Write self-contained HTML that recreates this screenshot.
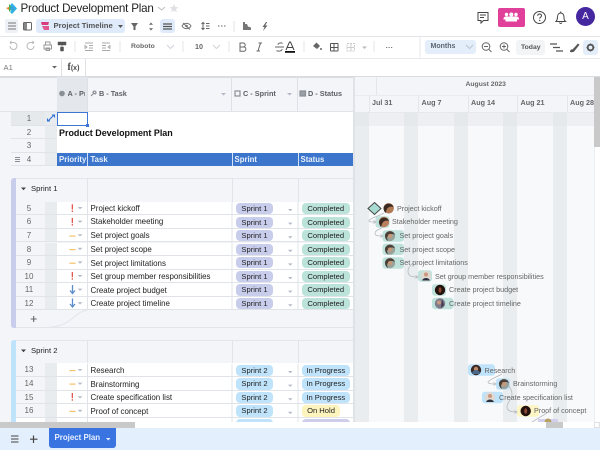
<!DOCTYPE html>
<html><head><meta charset="utf-8"><style>
html,body{margin:0;padding:0;width:600px;height:450px;overflow:hidden;background:#fff}
*{box-sizing:border-box}
body{font-family:"Liberation Sans",sans-serif;position:relative;color:#222}
.a,.t,.r,.n,.g,.c,.tx,.sp,.st,.l{position:absolute}
.t{white-space:nowrap;line-height:12px}
.r{left:11px;width:342px;height:13.6px;background:#fff;border-bottom:1px solid #e0e3e7}
.n{left:16px;width:29px;height:13.6px;background:#f3f5f8;border-bottom:1px solid #e0e3e7;font-size:8px;line-height:13px;text-align:center;color:#666;text-indent:-3px}
.top{left:11px;width:34px;text-indent:2px}
.g{left:45px;width:12px;height:13.6px;background:#e9ecef;border-bottom:1px solid #e0e3e7}
.tx{left:90.5px;font-size:7.95px;line-height:13.6px;color:#222;white-space:nowrap}
.sp{left:236px;width:37px;height:11.4px;border-radius:4px;font-size:7.6px;line-height:11.4px;text-align:center;color:#222}
.st{left:302px;width:47.5px;height:11.4px;border-radius:4px;font-size:7.6px;line-height:11.4px;text-align:center;color:#222}
.s1{background:#c9cdec}.s2{background:#bfe3fb}
.cp{background:#bce3da}.ip{background:#bfe3fb}.oh{background:#fdf3bd;width:38px}.ns{background:#cfcdec}
.l{font-size:7.2px;line-height:12px;color:#666;white-space:nowrap}
.h{font-size:7.3px;font-weight:bold;color:#5c5f64;line-height:12px}
.w{font-size:7.2px;font-weight:bold;color:#666}
.b4{top:154px;font-size:7.8px;font-weight:bold;color:#eaf1fb}
</style></head><body>

<!-- base -->
<div class="a" style="left:0;top:77px;width:600px;height:351px;background:#f3f5f9"></div>
<div class="a" style="left:0;top:36px;width:600px;height:1px;background:#e3e5e8"></div>
<div class="a" style="left:0;top:58px;width:600px;height:1px;background:#e8eaed"></div>
<div class="a" style="left:0;top:76px;width:600px;height:1.5px;background:#d9dce0"></div>

<!-- title -->
<div class="t" style="left:20.5px;top:3px;font-size:11.6px;letter-spacing:-.2px;color:#1f1f1f">Product Development Plan</div>

<!-- toolbar backgrounds -->
<div class="a" style="left:5px;top:19px;width:13px;height:14px;background:#eef1f6;border-radius:2px"></div>
<div class="a" style="left:36px;top:19px;width:89px;height:14px;background:#dfeafb;border-radius:3px"></div>
<div class="a" style="left:160px;top:19px;width:15px;height:14px;background:#dfeafb;border-radius:3px"></div>
<div class="t" style="left:53.5px;top:20px;font-size:7.7px;font-weight:bold;color:#555">Project Timeline</div>
<div class="t" style="left:131px;top:41px;font-size:6.8px;font-weight:bold;color:#666">Roboto</div>
<div class="t" style="left:195px;top:41px;font-size:7.2px;font-weight:bold;color:#666">10</div>
<div class="a" style="left:425px;top:40px;width:51px;height:14px;background:#e4eefb;border-radius:3px"></div>
<div class="t" style="left:430.5px;top:41px;font-size:7px;font-weight:bold;color:#5b6470">Months</div>
<div class="a" style="left:516px;top:40px;width:29px;height:15px;background:#f3f4f6;border-radius:3px"></div>
<div class="t" style="left:521px;top:42px;font-size:6.8px;font-weight:bold;color:#555">Today</div>
<div class="a" style="left:583px;top:40px;width:15px;height:15px;background:#e4eefb;border-radius:3px"></div>
<div class="t" style="left:3.5px;top:62px;font-size:7.6px;color:#777">A1</div>
<div class="a" style="left:61px;top:59px;width:1px;height:17px;background:#dfe1e5"></div>
<div class="a" style="left:85px;top:59px;width:1px;height:17px;background:#dfe1e5"></div>
<div class="t" style="left:67.5px;top:62px;font-family:'Liberation Serif',serif;font-size:10px;font-weight:bold;color:#444">f<span style="font-family:'Liberation Sans';font-size:7px">(x)</span></div>

<!-- top right -->
<div class="a" style="left:498px;top:8px;width:26.5px;height:19px;background:#e0409a;border-radius:2px"></div>
<div class="a" style="left:576px;top:7px;width:19px;height:19px;background:#4527a0;border-radius:50%;color:#fff;font-size:10px;line-height:19px;text-align:center">A</div>

<!-- toolbar icons -->
<svg class="a" style="left:0;top:0" width="600" height="77" viewBox="0 0 600 77" fill="none">
<!-- logo -->
<path d="M6 8l3-1v3z" fill="#f0821e"/><path d="M9 4l4 4-4 4z" fill="#4caf50"/><path d="M12 3l5 5.500-5 5.500-2-2 3-3.500-3-3z" fill="#2fb4e6"/><path d="M9.500 8.500l3-3 3 3-3 3z" fill="#35a7dc"/>
<!-- chevron, star -->
<path d="M158 7l3.500 3 3.500-3" stroke="#b9bdc3"/>
<path d="M174 4l1.300 3 3.200.2-2.500 2 .9 3.200-2.900-1.800-2.900 1.800.9-3.200-2.500-2 3.200-.2z" fill="#dfe1e4"/>
<!-- view row -->
<path d="M8 23h8M8 26h8M8 29h8" stroke="#777" stroke-width="1"/>
<rect x="23.500" y="22.500" width="8" height="7.500" stroke="#666" rx="1"/><rect x="24" y="23" width="3" height="6.500" fill="#888"/>
<path d="M41 22h8l-.8 3h-6.400z" fill="#d93a7c"/><path d="M42 26h7v4h-5z" fill="#e0568f"/>
<path d="M118 25h5l-2.500 3z" fill="#555"/>
<path d="M131 23h7l-2.500 3.500v3.500h-2v-3.500z" fill="#666"/>
<path d="M151 22.500l2 2.200h-4zM151 30.500l2-2.200h-4z" fill="#666"/>
<path d="M163 24h9M163 26.500h9M163 29h9" stroke="#555" stroke-width="1.300"/>
<path d="M182 26c2-3.500 7-3.500 9 0-2 3.500-7 3.500-9 0z" stroke="#777"/><circle cx="186.500" cy="26" r="1.300" fill="#777"/><path d="M183 23l7 6.500" stroke="#777"/>
<path d="M203 23v6M201.500 24l1.500-1.500 1.500 1.500M201.500 28l1.500 1.500 1.500-1.500M206 23.500h3.500M206 26h3.500M206 28.500h3.500" stroke="#666"/>
<path d="M218 26h1.500M221 26h1.500M224 26h1.500" stroke="#666"/>
<path d="M234 21v11" stroke="#e1e3e6"/>
<path d="M243 22v8h8v-2.500l-3-1-1-2.500h-2v-2z" fill="#777"/><path d="M266 22l-3.500 5h2l-1.500 4 4.500-5.500h-2.300l2-3.500z" fill="#666"/>
<!-- format row -->
<path d="M10 46a3.500 3.500 0 1 0 3.500-3.500H10m0 0l1.500-1.500M10 42.500l1.500 1.500" stroke="#bbb"/>
<path d="M34 46a3.500 3.500 0 1 1-3.500-3.500H34m0 0l-1.500-1.500M34 42.500l-1.500 1.500" stroke="#bbb"/>
<path d="M44 45h7.500v4h-7.500zM45.500 45v-3h4.500v3M46 48h3.500v2.500H46z" stroke="#999"/>
<path d="M58 42h8v3h-8zM62 45v1.500M60.500 47h3v4h-3z" fill="#555" stroke="#555" stroke-width=".5"/>
<path d="M75 41v11" stroke="#e4e6e8"/>
<path d="M85 43h8M89 45.500h4M89 48h4M85 50.500h8M85 45.500l2 1.500-2 1.500z" stroke="#aaa" stroke-width=".9"/>
<path d="M102 43h8M102 45.500h4M102 48h4M102 50.500h8M110 45.500l-2 1.500 2 1.500z" stroke="#aaa" stroke-width=".9"/>
<path d="M120 41v11" stroke="#e4e6e8"/>
<path d="M167 45l3.500 3.500L174 45" stroke="#d0d3d7"/>
<path d="M183 41v11" stroke="#e4e6e8"/>
<path d="M213 45l3.500 3.500L220 45" stroke="#d0d3d7"/>
<path d="M229 41v11" stroke="#e4e6e8"/>
<path d="M240 43h3.200a2 2 0 0 1 0 4H240zM240 47h3.800a2.100 2.100 0 0 1 0 4.200H240z" stroke="#666" stroke-width="1"/>
<path d="M258.500 43h3.500M256.500 51H260M260.500 43l-2.500 8" stroke="#666" stroke-width="1"/>
<path d="M275 47h9M282.500 43.500c-.8-.8-4.500-1-4.500 1.300M276.500 50.500c1 1 5.500 1 5.500-1.500" stroke="#666"/>
<path d="M286 50l3.500-8h1l3.500 8M287.500 47.500h5" stroke="#444" stroke-width="1"/><rect x="285" y="51" width="10" height="1.800" fill="#111"/>
<path d="M304 41v11" stroke="#e4e6e8"/>
<path d="M313 46l3.500-3.500 3.500 3.500-3 3z" fill="#666"/><circle cx="321" cy="49" r="1" fill="#666"/>
<rect x="330.500" y="43.500" width="7.500" height="7.500" stroke="#555" rx=".5" stroke-width="1"/><path d="M334 43.500v7.500M330.500 47.500h7.500" stroke="#555"/>
<rect x="347" y="43.500" width="7.500" height="7.500" stroke="#ccc" stroke-dasharray="2 1"/><path d="M351 43.500v7.500M347 47.500h7.500" stroke="#ccc"/>
<path d="M362 46.500h5l-2.500 2.500z" fill="#bbb"/>
<path d="M374 41v11" stroke="#e4e6e8"/>
<path d="M386 47.500h1.200M388.500 47.500h1.200M391 47.500h1.200" stroke="#777"/>
<path d="M420 37v21" stroke="#e8eaed"/>
<path d="M466 45l3.500 3.500L473 45" stroke="#b9c4d2"/>
<circle cx="486" cy="46.500" r="3.800" stroke="#666"/><path d="M484 46.500h4M489 49.500l2.500 2.500" stroke="#666"/>
<circle cx="504" cy="46.500" r="3.800" stroke="#666"/><path d="M502 46.500h4M504 44.500v4M507 49.500l2.500 2.500" stroke="#666"/>
<path d="M550 44h7M553 47.500h7M556 51h7" stroke="#555" stroke-width="1.200"/>
<path d="M570 52c0-2 1-3 2.500-2.500l5.500-6 1.500 1.200-5 6.300c-.8 1.300-3 1.500-4.500 1z" fill="#555"/>
<circle cx="590.500" cy="47.500" r="2.800" stroke="#555" stroke-width="1.800"/><path d="M590.500 43.500v1.500M590.500 50v1.500M586.500 47.500H588M593 47.500h1.500M587.800 44.800l1 1M592.200 49.200l1 1M593.200 44.800l-1 1M588.800 49.200l-1 1" stroke="#555" stroke-width="1.200"/>
<!-- formula -->
<path d="M52 66h5l-2.500 2.500z" fill="#666"/>
<!-- right top icons -->
<path d="M478 12.500h10v8h-4.500l-2.500 2.500v-2.500h-3z" stroke="#444" stroke-width="1"/><path d="M480 15h6M480 17.500h4" stroke="#444"/>
<circle cx="506.500" cy="14.500" r="1.700" fill="#fff"/><circle cx="511.300" cy="14.500" r="2" fill="#fff"/><circle cx="516" cy="14.500" r="1.700" fill="#fff"/><path d="M503.500 19c0-1.500 1-2.500 3-2.500h9.500c2 0 3 1 3 2.500v.5h-2v2h-11.500v-2h-2z" fill="#fff"/>
<circle cx="539.500" cy="17.500" r="6" stroke="#444" stroke-width="1"/><path d="M537.700 15.800c0-2.400 3.800-2.400 3.800 0 0 1.300-1.800 1.300-1.800 2.800" stroke="#444"/><circle cx="539.700" cy="20.500" r=".7" fill="#444"/>
<path d="M556 21.500h9.500c-1.500-1.300-1.500-2.500-1.500-4.500 0-2.500-1.500-4-3.300-4s-3.200 1.500-3.200 4c0 2-.4 3.200-1.500 4.500zM559.500 22.500c.4 1.300 2 1.300 2.500 0M560.700 13v-1.500" stroke="#444"/>
</svg>

<!-- column headers -->
<div class="a" style="left:57px;top:77px;width:30px;height:35px;background:#e4e8ec"></div>
<div class="a" style="left:87px;top:77px;width:1px;height:35px;background:#dde0e5"></div>
<div class="a" style="left:231px;top:77px;width:1px;height:35px;background:#dde0e5"></div>
<div class="a" style="left:297px;top:77px;width:1px;height:35px;background:#dde0e5"></div>
<div class="a" style="left:353px;top:77px;width:2px;height:351px;background:#dfe2e6"></div>
<div class="a" style="left:0;top:111px;width:354px;height:1px;background:#e0e3e7"></div>
<div class="t h" style="left:67.500px;top:88px;width:17px;overflow:hidden">A - Priority</div>
<div class="t h" style="left:99px;top:88px">B - Task</div>
<div class="t h" style="left:243px;top:88px">C - Sprint</div>
<div class="t h" style="left:308px;top:88px">D - Status</div>
<svg class="a" style="left:0;top:77px" width="354" height="35" fill="none">
<circle cx="62" cy="16.500" r="2.800" fill="#8a8f96"/>
<path d="M91 19l3-3M93 15.500a1.500 1.500 0 1 1 2 1.500z" stroke="#8a8f96" stroke-width="1.200"/>
<rect x="235" y="14" width="5" height="5" stroke="#8a8f96" stroke-width="1.200"/>
<rect x="300" y="14" width="5.500" height="5" stroke="#8a8f96" stroke-width="1.200" fill="#9aa0a6"/>
<path d="M221 16h5l-2.500 2.500zM287 16h5l-2.500 2.500z" fill="#b3bac6"/>
</svg>

<!-- sheet top rows -->
<div class="n top" style="top:112px;background:#e6e9ec">1</div><div class="g" style="top:112px"></div>
<div class="n top" style="top:125.700px">2</div><div class="g" style="top:125.700px"></div>
<div class="n top" style="top:139.300px">3</div><div class="g" style="top:139.300px"></div>
<div class="n top" style="top:152.900px">4</div><div class="g" style="top:152.900px"></div>
<div class="a" style="left:57px;top:112px;width:296px;height:41px;background:#fff"></div>
<div class="a" style="left:57px;top:112px;width:30.500px;height:14px;border:1.200px solid #3d77d6;background:#fff"></div>
<div class="a" style="left:85.500px;top:123.500px;width:3.500px;height:3.500px;background:#3d77d6"></div>
<div class="t" style="left:59px;top:127px;font-size:8.950px;font-weight:bold;color:#111">Product Development Plan</div>
<div class="a" style="left:57px;top:153px;width:296px;height:13.300px;background:#3b75cc"></div>
<div class="a" style="left:87px;top:153px;width:1px;height:13.300px;background:#d6e2f5"></div>
<div class="a" style="left:231.500px;top:153px;width:1px;height:13.300px;background:#d6e2f5"></div>
<div class="a" style="left:297.500px;top:153px;width:1px;height:13.300px;background:#d6e2f5"></div>
<div class="t b4" style="left:59px">Priority</div>
<div class="t b4" style="left:90.500px">Task</div>
<div class="t b4" style="left:234.500px">Sprint</div>
<div class="t b4" style="left:300.500px">Status</div>
<svg class="a" style="left:0;top:112px" width="60" height="56" fill="none">
<path d="M48 9l6-6M52 3h2.500v2.500M50 9h-2.500V6.500" stroke="#2f6fd6" stroke-width="1.100"/>
<path d="M15 45.500h5M15 47.500h5M15 49.500h5" stroke="#8b8f95" stroke-width="1.100"/>
</svg>

<!-- group 1 -->
<div class="a" style="left:11px;top:178px;width:342px;height:150px;background:#f3f5f9;border-bottom:1px solid #e2e5e9;border-radius:0 0 0 3px"></div>
<div class="a" style="left:11px;top:178px;width:5px;height:150px;background:#c9cdec;border-radius:3px 0 0 3px"></div>
<div class="a" style="left:16px;top:178px;width:337px;height:1px;background:#e2e5e9"></div>
<div class="a" style="left:87px;top:178px;width:1px;height:24px;background:#e0e3e7"></div>
<div class="a" style="left:231.500px;top:178px;width:1px;height:24px;background:#e0e3e7"></div>
<div class="a" style="left:297.500px;top:178px;width:1px;height:24px;background:#e0e3e7"></div>
<div class="t" style="left:31px;top:183px;font-size:7.700px;color:#222">Sprint 1</div>

<!-- group 2 -->
<div class="a" style="left:11px;top:340px;width:342px;height:82px;background:#f3f5f9"></div>
<div class="a" style="left:11px;top:340px;width:5px;height:82px;background:#bfe3fb;border-radius:3px 0 0 0"></div>
<div class="a" style="left:16px;top:340px;width:337px;height:1px;background:#e2e5e9"></div>
<div class="a" style="left:87px;top:340px;width:1px;height:24px;background:#e0e3e7"></div>
<div class="a" style="left:231.500px;top:340px;width:1px;height:24px;background:#e0e3e7"></div>
<div class="a" style="left:297.500px;top:340px;width:1px;height:24px;background:#e0e3e7"></div>
<div class="t" style="left:31px;top:345px;font-size:7.700px;color:#222">Sprint 2</div>

<!-- rows group1 -->
<div class="r" style="top:201.700px;left:16px;width:337px"></div><div class="n" style="top:201.700px">5</div><div class="g" style="top:201.700px"></div><div class="tx" style="top:201.700px">Project kickoff</div><div class="sp s1" style="top:203px">Sprint 1</div><div class="st cp" style="top:203px">Completed</div>
<div class="r" style="top:215.300px;left:16px;width:337px"></div><div class="n" style="top:215.300px">6</div><div class="g" style="top:215.300px"></div><div class="tx" style="top:215.300px">Stakeholder meeting</div><div class="sp s1" style="top:216.500px">Sprint 1</div><div class="st cp" style="top:216.500px">Completed</div>
<div class="r" style="top:228.900px;left:16px;width:337px"></div><div class="n" style="top:228.900px">7</div><div class="g" style="top:228.900px"></div><div class="tx" style="top:229.300px">Set project goals</div><div class="sp s1" style="top:230px">Sprint 1</div><div class="st cp" style="top:230px">Completed</div>
<div class="r" style="top:242.500px;left:16px;width:337px"></div><div class="n" style="top:242.500px">8</div><div class="g" style="top:242.500px"></div><div class="tx" style="top:243px">Set project scope</div><div class="sp s1" style="top:243.500px">Sprint 1</div><div class="st cp" style="top:243.500px">Completed</div>
<div class="r" style="top:256.100px;left:16px;width:337px"></div><div class="n" style="top:256.100px">9</div><div class="g" style="top:256.100px"></div><div class="tx" style="top:256.600px">Set project limitations</div><div class="sp s1" style="top:257px">Sprint 1</div><div class="st cp" style="top:257px">Completed</div>
<div class="r" style="top:269.700px;left:16px;width:337px"></div><div class="n" style="top:269.700px">10</div><div class="g" style="top:269.700px"></div><div class="tx" style="top:270.200px">Set group member responsibilities</div><div class="sp s1" style="top:270.700px">Sprint 1</div><div class="st cp" style="top:270.700px">Completed</div>
<div class="r" style="top:283.300px;left:16px;width:337px"></div><div class="n" style="top:283.300px">11</div><div class="g" style="top:283.300px"></div><div class="tx" style="top:283.800px">Create project budget</div><div class="sp s1" style="top:284.300px">Sprint 1</div><div class="st cp" style="top:284.300px">Completed</div>
<div class="r" style="top:296.900px;left:16px;width:337px"></div><div class="n" style="top:296.900px">12</div><div class="g" style="top:296.900px"></div><div class="tx" style="top:297.400px">Create project timeline</div><div class="sp s1" style="top:297.800px">Sprint 1</div><div class="st cp" style="top:297.800px">Completed</div>

<!-- rows group2 -->
<div class="r" style="top:363.400px;left:16px;width:337px"></div><div class="n" style="top:363.400px">13</div><div class="g" style="top:363.400px"></div><div class="tx" style="top:364px">Research</div><div class="sp s2" style="top:364.800px">Sprint 2</div><div class="st ip" style="top:364.800px">In Progress</div>
<div class="r" style="top:377px;left:16px;width:337px"></div><div class="n" style="top:377px">14</div><div class="g" style="top:377px"></div><div class="tx" style="top:377.700px">Brainstorming</div><div class="sp s2" style="top:378.300px">Sprint 2</div><div class="st ip" style="top:378.300px">In Progress</div>
<div class="r" style="top:390.600px;left:16px;width:337px"></div><div class="n" style="top:390.600px">15</div><div class="g" style="top:390.600px"></div><div class="tx" style="top:391.200px">Create specification list</div><div class="sp s2" style="top:391.800px">Sprint 2</div><div class="st ip" style="top:391.800px">In Progress</div>
<div class="r" style="top:404.200px;left:16px;width:337px"></div><div class="n" style="top:404.200px">16</div><div class="g" style="top:404.200px"></div><div class="tx" style="top:404.800px">Proof of concept</div><div class="sp s2" style="top:405.400px">Sprint 2</div><div class="st oh" style="top:405.400px">On Hold</div>
<div class="r" style="top:417.800px;left:16px;width:337px"></div><div class="g" style="top:417.800px"></div><div class="sp s2" style="top:419px;color:transparent">Sprint 2</div><div class="st ns" style="top:419px;color:transparent">Not Started</div>

<!-- column lines, priority, chevrons -->
<svg class="a" style="left:0;top:178px" width="354" height="250" fill="none">
<path d="M87.500 24V132M232 24V132M298 24V132M87.500 186V244M232 186V244M298 186V244" stroke="#e0e3e7"/>
<path d="M21 9.500h5l-2.500 2.800zM21 171.500h5l-2.500 2.800z" fill="#444"/>
<g fill="#e0584f"><rect x="71.700" y="26.300" width="1.300" height="5.200"/><rect x="71.700" y="32.500" width="1.300" height="1.500"/>
<rect x="71.700" y="39.900" width="1.300" height="5.200"/><rect x="71.700" y="46.100" width="1.300" height="1.500"/>
<rect x="71.700" y="94" width="1.300" height="5.200"/><rect x="71.700" y="100.200" width="1.300" height="1.500"/>
<rect x="71.700" y="215" width="1.300" height="5.200"/><rect x="71.700" y="221.200" width="1.300" height="1.500"/></g>
<g fill="#f4c06a"><rect x="69.500" y="57.500" width="6" height="1.200"/><rect x="69.500" y="71" width="6" height="1.200"/><rect x="69.500" y="84.600" width="6" height="1.200"/>
<rect x="69.500" y="192" width="6" height="1.200"/><rect x="69.500" y="205.500" width="6" height="1.200"/><rect x="69.500" y="232.800" width="6" height="1.200"/></g>
<path d="M72.500 107v8M70 112.500l2.500 3 2.500-3M72.500 120.500v8M70 126l2.500 3 2.500-3" stroke="#5b8ccc" stroke-width="1.300"/>
<g fill="#b3bac6"><path d="M77.700 29h4.800L80 31.300zM77.700 42.600h4.800L80 44.900zM77.700 56.200h4.800L80 58.500zM77.700 69.800h4.800L80 72.100zM77.700 83.400h4.800L80 85.700zM77.700 97h4.800L80 99.300zM77.700 110.600h4.800L80 112.900zM77.700 124.200h4.800L80 126.500zM77.700 191h4.800L80 193.300zM77.700 204.600h4.800L80 206.900zM77.700 218.200h4.800L80 220.500zM77.700 231.800h4.800L80 234.100z"/>
<path d="M288 31h4.500l-2.200 2.300zM288 44.600h4.500l-2.200 2.300zM288 58.200h4.500l-2.200 2.300zM288 71.800h4.500l-2.200 2.300zM288 85.400h4.500l-2.200 2.300zM288 99h4.500l-2.200 2.300zM288 112.600h4.500l-2.200 2.300zM288 126.200h4.500l-2.200 2.300zM288 193h4.500l-2.200 2.300zM288 206.600h4.500l-2.200 2.300zM288 220.200h4.500l-2.200 2.300zM288 233.800h4.500l-2.200 2.300z"/></g>
<path d="M33.700 138v6M30.700 141h6" stroke="#666" stroke-width="1.100"/>
<path d="M45 149.500c12 0 19-3 26-8 5-4 10-9 16-9" stroke="#e2e5e9"/>
</svg>

<!-- gantt -->
<div class="a" style="left:355px;top:77px;width:239px;height:345px;background:#f8f9fb"></div>
<div class="a" style="left:355px;top:77px;width:239px;height:35px;background:#f3f5f9"></div>
<div class="a" style="left:355px;top:112px;width:14px;height:310px;background:#e9edef"></div>
<div class="a" style="left:404px;top:112px;width:14px;height:310px;background:#e9edef"></div>
<div class="a" style="left:453.500px;top:112px;width:14px;height:310px;background:#e9edef"></div>
<div class="a" style="left:503px;top:112px;width:14px;height:310px;background:#e9edef"></div>
<div class="a" style="left:553px;top:112px;width:14px;height:310px;background:#e9edef"></div>
<div class="a" style="left:355px;top:112px;width:239px;height:14px;background:rgba(226,230,233,.5)"></div>
<div class="a" style="left:355px;top:94.500px;width:239px;height:1px;background:#e9ebef"></div>
<div class="a" style="left:355px;top:111.500px;width:239px;height:1px;background:#e6e8ec"></div>
<div class="a" style="left:375.500px;top:77px;width:1px;height:18px;background:#e4e7ea"></div>
<div class="a" style="left:368.500px;top:95px;width:1px;height:17px;background:#e4e7ea"></div>
<div class="a" style="left:418px;top:95px;width:1px;height:17px;background:#e4e7ea"></div>
<div class="a" style="left:467.500px;top:95px;width:1px;height:17px;background:#e4e7ea"></div>
<div class="a" style="left:517px;top:95px;width:1px;height:17px;background:#e4e7ea"></div>
<div class="a" style="left:567px;top:95px;width:1px;height:17px;background:#e4e7ea"></div>
<div class="t" style="left:465.500px;top:79px;font-size:6.800px;font-weight:bold;color:#666">August 2023</div>
<div class="t w" style="left:372px;top:97px">Jul 31</div>
<div class="t w" style="left:421.500px;top:97px">Aug 7</div>
<div class="t w" style="left:471px;top:97px">Aug 14</div>
<div class="t w" style="left:520.500px;top:97px">Aug 21</div>
<div class="t w" style="left:570px;top:97px;width:24px;overflow:hidden">Aug 28</div>

<!-- bars -->
<svg class="a" style="left:355px;top:77px" width="239" height="345" fill="none">
<g fill="#bfe3dc">
<rect x="20.500" y="139.300" width="14" height="11.400" rx="3"/>
<rect x="27.500" y="153.300" width="21.500" height="11.400" rx="3"/><rect x="27.500" y="166.600" width="21.500" height="11.400" rx="3"/><rect x="27.500" y="180.300" width="21.500" height="11.400" rx="3"/>
<rect x="63" y="193.300" width="14" height="11.400" rx="3"/><rect x="77" y="207.300" width="14" height="11.400" rx="3"/><rect x="77" y="220.800" width="21.500" height="11.400" rx="3"/>
</g>
<g fill="#bfe3fb"><rect x="113" y="287.300" width="27" height="11.400" rx="3"/><rect x="141" y="301.300" width="14" height="11.400" rx="3"/><rect x="127" y="314.800" width="21" height="11.400" rx="3"/></g>
<rect x="162" y="328.300" width="22" height="11.400" rx="3" fill="#fdf5c4"/>
<rect x="183" y="342" width="20" height="3" fill="#d2d0ee"/>
<path d="M19.500 125.500l6.500 6-6.500 6-6.500-6z" fill="#a8dbd2" stroke="#444" stroke-width="1"/>
<g stroke="#b8bcc0" stroke-width=".8">
<path d="M29 136C24 139 15 141 14 143.500C13.500 145 16 145 21 145"/><path d="M18.500 143.500L21 145L18.500 146.500"/>
<path d="M30 149C26 152 20 153 20 156C20 159 23 159 28 159"/><path d="M25.500 157.500L28 159L25.500 160.500"/>
<path d="M58 186C55 189 53 191 53 194C53 199 56 200 63 200"/><path d="M60.500 198.500L63 200L60.500 201.500"/>
<path d="M147 297C142 300 135 302 133 305C133 307 137 307 141 307"/><path d="M138.500 305.500L141 307L138.500 308.500"/>
<path d="M153 308C156 311 157 314 157 318C156 323 152 326 152 330C152 334 156 335 162 335"/><path d="M159.500 333.500L162 335L159.500 336.500"/>
<path d="M192 336C187 339 182 342 177 345"/>
</g>
<!-- avatars -->
<g>
<circle cx="33.700" cy="131.300" r="5.200" fill="#b07a55"/><path d="M28.500 131a5.200 5.200 0 0 1 10 -1c-3-1-6 0-7 3l-1 3c-1-1-2-3-2-5z" fill="#3a2a22"/>
<circle cx="29" cy="145" r="5.200" fill="#b98060"/><path d="M24 145a5.200 5.200 0 0 1 10 -1c-3-1-6 0-7 3l-1 3c-1-1-2-3-2-5z" fill="#3a2a22"/>
<circle cx="35" cy="159" r="5.200" fill="#9aa39b"/><path d="M30 158a5.200 5.200 0 0 1 10 0c-3-2-7-1-8 3l1 3c-2-1-3-3-3-6z" fill="#4a4038"/><circle cx="35" cy="159" r="2" fill="#c99878"/>
<circle cx="35" cy="172.500" r="5.200" fill="#9aa39b"/><path d="M30 171.500a5.200 5.200 0 0 1 10 0c-3-2-7-1-8 3l1 3c-2-1-3-3-3-6z" fill="#4a4038"/><circle cx="35" cy="172.500" r="2" fill="#c99878"/>
<circle cx="35" cy="186" r="5.200" fill="#9aa39b"/><path d="M30 185a5.200 5.200 0 0 1 10 0c-3-2-7-1-8 3l1 3c-2-1-3-3-3-6z" fill="#4a4038"/><circle cx="35" cy="186" r="2" fill="#c99878"/>
<circle cx="71" cy="199" r="5.200" fill="#dfd9d2"/><circle cx="71" cy="197.500" r="2" fill="#c99a80"/><path d="M67 203.500a4.500 4.500 0 0 1 8 0z" fill="#2b3140"/>
<circle cx="85" cy="213" r="5.200" fill="#23120e"/><ellipse cx="85" cy="213" rx="1.500" ry="2.800" fill="#8a4a32"/>
<circle cx="85" cy="226.500" r="5.200" fill="#7d7a8c"/><circle cx="84" cy="225.500" r="2" fill="#c79a80"/><path d="M87 222l2 6-3 3z" fill="#3f3a48"/>
<circle cx="121" cy="293" r="5.200" fill="#3a2a26"/><circle cx="121" cy="292" r="2.200" fill="#c0896a"/><path d="M117 297a4 4 0 0 1 8 0z" fill="#4a6a8a"/>
<circle cx="149" cy="307" r="5.200" fill="#9aa39b"/><path d="M144 306a5.200 5.200 0 0 1 10 0c-3-2-7-1-8 3l1 3c-2-1-3-3-3-6z" fill="#4a4038"/><circle cx="149" cy="307" r="2" fill="#c99878"/>
<circle cx="135" cy="320.500" r="5.200" fill="#dfd9d2"/><circle cx="135" cy="319" r="2" fill="#c99a80"/><path d="M131 325a4.500 4.500 0 0 1 8 0z" fill="#2b3140"/>
<circle cx="170.700" cy="334" r="5.200" fill="#23120e"/><ellipse cx="170.700" cy="334" rx="1.500" ry="2.800" fill="#8a4a32"/>
<circle cx="193" cy="345" r="3.500" fill="#b8a060"/>
</g>
</svg>

<!-- labels -->
<div class="l" style="left:397px;top:202.500px">Project kickoff</div>
<div class="l" style="left:392px;top:216px">Stakeholder meeting</div>
<div class="l" style="left:399.500px;top:230px">Set project goals</div>
<div class="l" style="left:399.500px;top:243.500px">Set project scope</div>
<div class="l" style="left:399.500px;top:257px">Set project limitations</div>
<div class="l" style="left:435px;top:270.500px">Set group member responsibilities</div>
<div class="l" style="left:449px;top:284px">Create project budget</div>
<div class="l" style="left:449px;top:297.500px">Create project timeline</div>
<div class="l" style="left:484.500px;top:364.500px">Research</div>
<div class="l" style="left:513px;top:378px">Brainstorming</div>
<div class="l" style="left:499px;top:391.500px">Create specification list</div>
<div class="l" style="left:534px;top:405px">Proof of concept</div>

<!-- scrollbars -->
<div class="a" style="left:594px;top:77px;width:6px;height:351px;background:#fff;border-left:1px solid #eceef1"></div>
<div class="a" style="left:594px;top:77px;width:6px;height:70px;background:#c9c9c9"></div>
<div class="a" style="left:0;top:422px;width:600px;height:6px;background:#fff"></div>
<div class="a" style="left:0;top:422px;width:135px;height:6px;background:#c9c9c9"></div>
<div class="a" style="left:546px;top:422px;width:17px;height:6px;background:#c9c9c9"></div>
<div class="a" style="left:594px;top:422px;width:6px;height:6px;background:#fff;border:1px solid #dfe1e4"></div>

<!-- tab bar -->
<div class="a" style="left:0;top:428px;width:600px;height:22px;background:#e3effd"></div>
<div class="a" style="left:49px;top:428px;width:67px;height:20px;background:#3a74e0;border-radius:0 0 3px 3px"></div>
<div class="t" style="left:54.500px;top:432px;font-size:7.900px;font-weight:bold;color:#e8f0ff">Project Plan</div>
<svg class="a" style="left:0;top:428px" width="120" height="22" fill="none">
<path d="M11 8h7.500M11 11h7.500M11 14h7.500" stroke="#444" stroke-width="1.100"/>
<path d="M33.500 7.500v7.500M30 11.200h7.500" stroke="#444" stroke-width="1.200"/>
<path d="M106 10h4.500l-2.200 2.500z" fill="#e8f0ff"/>
</svg>
</body></html>
